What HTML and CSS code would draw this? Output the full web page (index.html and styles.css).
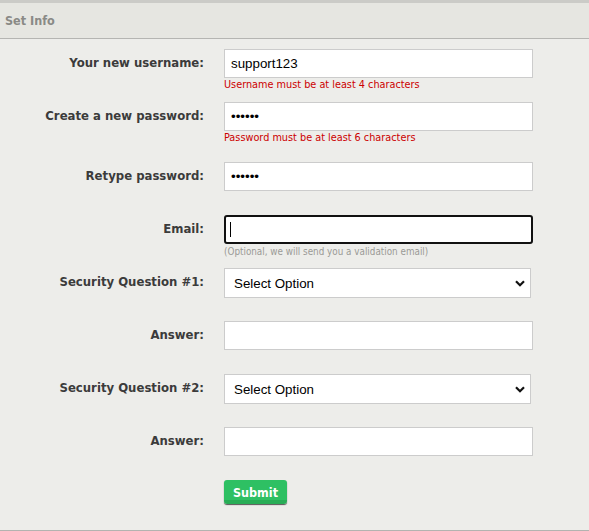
FILE: index.html
```html
<!DOCTYPE html>
<html>
<head>
<meta charset="utf-8">
<title>Set Info</title>
<link rel="stylesheet" href="styles.css">
</head>
<body>
<div class="panel">
  <div class="head">Set Info</div>
  <div class="form">
    <div class="row">
      <label class="lbl">Your new username:</label>
      <div class="field">
        <input class="txt" type="text" value="support123">
        <div class="err">Username must be at least 4 characters</div>
      </div>
    </div>
    <div class="row tall">
      <label class="lbl">Create a new password:</label>
      <div class="field">
        <input class="txt" type="password" value="secret">
        <div class="err">Password must be at least 6 characters</div>
      </div>
    </div>
    <div class="row">
      <label class="lbl">Retype password:</label>
      <div class="field">
        <input class="txt" type="password" value="secret">
      </div>
    </div>
    <div class="row">
      <label class="lbl">Email:</label>
      <div class="field">
        <div class="focuswrap">
          <input class="txt focused" type="text" value="">
          <span class="caret"></span>
        </div>
        <div class="hint">(Optional, we will send you a validation email)</div>
      </div>
    </div>
    <div class="row">
      <label class="lbl">Security Question #1:</label>
      <div class="field">
        <div class="selwrap">
          <select class="sel"><option>Select Option</option></select>
          <svg class="chev" width="10" height="7" viewBox="0 0 10 7"><path d="M1 1.2 L5 5.2 L9 1.2" fill="none" stroke="#111" stroke-width="2.2"/></svg>
        </div>
      </div>
    </div>
    <div class="row">
      <label class="lbl">Answer:</label>
      <div class="field">
        <input class="txt" type="text" value="">
      </div>
    </div>
    <div class="row">
      <label class="lbl">Security Question #2:</label>
      <div class="field">
        <div class="selwrap">
          <select class="sel"><option>Select Option</option></select>
          <svg class="chev" width="10" height="7" viewBox="0 0 10 7"><path d="M1 1.2 L5 5.2 L9 1.2" fill="none" stroke="#111" stroke-width="2.2"/></svg>
        </div>
      </div>
    </div>
    <div class="row">
      <label class="lbl">Answer:</label>
      <div class="field">
        <input class="txt" type="text" value="">
      </div>
    </div>
    <div class="actions">
      <button class="btn" type="button">Submit</button>
    </div>
  </div>
</div>
</body>
</html>
```
FILE: styles.css
```css
html, body {
  margin: 0;
  padding: 0;
  background: #ededea;
}
.panel {
  box-sizing: border-box;
  width: 589px;
  height: 531px;
  border-top: 3px solid #cbcbc7;
  border-bottom: 1px solid #b3b3b0;
  background: #ededea;
  font-family: "DejaVu Sans Condensed", "DejaVu Sans", sans-serif;
}
.head {
  height: 35px;
  line-height: 35px;
  padding-left: 5px;
  background: #e6e6e1;
  border-bottom: 1px solid #b5b5b2;
  color: #8a8a86;
  font-weight: bold;
  font-size: 12.5px;
}
.form {
  padding-top: 10px;
}
.row {
  display: flex;
  align-items: flex-start;
  height: 53px;
}
.row.tall {
  height: 60px;
}
.lbl {
  flex: none;
  width: 204px;
  text-align: right;
  line-height: 27px;
  font-size: 13px;
  font-weight: bold;
  color: #3b3b3b;
}
.field {
  margin-left: 20px;
}
.txt {
  display: block;
  box-sizing: border-box;
  width: 309px;
  height: 29px;
  margin: 0;
  padding: 0 6px;
  border: 1px solid #cccccc;
  border-radius: 0;
  background: #fff;
  font-family: "Liberation Sans", Arial, sans-serif;
  font-size: 13.33px;
  color: #000;
  outline: none;
}
.txt.focused {
  border: 2px solid #111;
  border-radius: 3px;
}
.focuswrap {
  position: relative;
}
.caret {
  position: absolute;
  left: 6px;
  top: 7px;
  width: 1px;
  height: 15px;
  background: #000;
}
.err {
  margin-top: 0;
  line-height: 14px;
  font-size: 10.8px;
  color: #cc0000;
}
.hint {
  margin-top: 1px;
  line-height: 14px;
  font-size: 9.8px;
  color: #9a9a96;
}
.selwrap {
  position: relative;
  width: 307px;
}
.sel {
  display: block;
  box-sizing: border-box;
  width: 307px;
  height: 30px;
  margin: 0;
  padding: 0 0 0 9px;
  border: 1px solid #cccccc;
  border-radius: 0;
  background: #fff;
  -webkit-appearance: none;
  appearance: none;
  font-family: "Liberation Sans", Arial, sans-serif;
  font-size: 13.33px;
  color: #000;
}
.chev {
  position: absolute;
  right: 6px;
  top: 12px;
  pointer-events: none;
}
.actions {
  padding-left: 224px;
}
.btn {
  box-sizing: border-box;
  width: 63px;
  height: 24px;
  padding: 0;
  border: none;
  border-radius: 3px;
  background: linear-gradient(#2ec063 0, #2ec063 20px, #28ad56 20px);
  box-shadow: 0 1px 1px #555;
  color: #fff;
  font-family: "DejaVu Sans Condensed", "DejaVu Sans", sans-serif;
  font-size: 12.5px;
  font-weight: bold;
}
```
